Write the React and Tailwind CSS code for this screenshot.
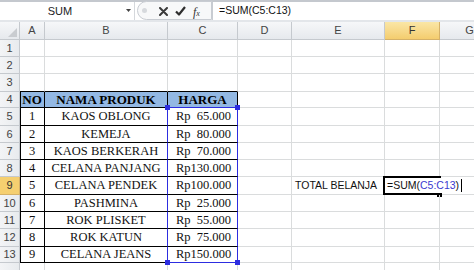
import React from 'react';

const items = [
  ['1', 'KAOS OBLONG', '65.000'],
  ['2', 'KEMEJA', '80.000'],
  ['3', 'KAOS BERKERAH', '70.000'],
  ['4', 'CELANA PANJANG', '130.000'],
  ['5', 'CELANA PENDEK', '100.000'],
  ['6', 'PASHMINA', '25.000'],
  ['7', 'ROK PLISKET', '55.000'],
  ['8', 'ROK KATUN', '75.000'],
  ['9', 'CELANA JEANS', '150.000'],
];

const colW = ['w-[20px]', 'w-[25px]', 'w-[123px]', 'w-[70px]', 'w-[54px]', 'w-[93px]', 'w-[55px]', 'w-[60px]'];
const rowH = ['h-[17px]', 'h-[17px]', 'h-[18px]', 'h-[16px]', 'h-[18px]', 'h-[17px]', 'h-[17px]', 'h-[17px]', 'h-[18px]', 'h-[17px]', 'h-[17px]', 'h-[18px]', 'h-[16px]', 'h-[20px]'];

const sans = { fontFamily: '"Liberation Sans", Arial, sans-serif' };
const serif = { fontFamily: '"Liberation Serif", "Times New Roman", serif' };

const grid = 'shrink-0 border-r border-b border-[#dadcdd]';

function Handle({ pos }) {
  return <span className={`absolute w-[5px] h-[5px] bg-[#2d2de0] ${pos}`} />;
}

function FormulaBar() {
  return (
    <div className="flex h-[22px] border-t-2 border-[#c4c8ce] bg-white border-b-2 border-b-[#e3e6ea]" style={sans}>
      <div className="w-[135px] shrink-0 flex items-center relative border-r border-[#d5d8dc]">
        <span className="w-[120px] text-center text-[11px] text-[#222]">SUM</span>
        <svg className="absolute left-[126px] top-[7px]" width="5" height="4" viewBox="0 0 5 4">
          <path d="M0 0h5L2.5 3z" fill="#444" />
        </svg>
      </div>
      <div className="w-[75px] shrink-0 flex items-center relative bg-[#f7f8f9] rounded-l-[10px] border border-[#c8ccd2] ml-[2px] -mt-[1px]">
        <span className="absolute left-[4px] top-[6px] w-[5px] h-[5px] rounded-full bg-[#d6d9dd]" />
        <svg className="absolute left-[21px] top-[5px]" width="9" height="9" viewBox="0 0 9 9">
          <path d="M1 1l7 7M8 1L1 8" stroke="#3a3a3a" strokeWidth="2" strokeLinecap="round" />
        </svg>
        <svg className="absolute left-[37px] top-[4px]" width="11" height="10" viewBox="0 0 11 10">
          <path d="M1 5.5L4 8.5L10 1" stroke="#2e2e2e" strokeWidth="2.2" fill="none" strokeLinejoin="round" />
        </svg>
        <span className="absolute left-[55px] top-[1px] text-[12px] italic text-[#333]" style={serif}>
          f<span className="text-[8px]">x</span>
        </span>
      </div>
      <div className="flex-1 flex items-center pl-[6px] border-l border-[#c8ccd2] text-[10.5px] text-[#111]">
        =SUM(C5:C13)
      </div>
    </div>
  );
}

function ColHeaders() {
  const letters = ['A', 'B', 'C', 'D', 'E', 'F', 'G'];
  return (
    <div className="flex h-[18px]" style={sans}>
      <div className={`${colW[0]} shrink-0 relative border-r border-b border-[#c5c9ce] bg-gradient-to-b from-[#f6f7f9] to-[#e6e9ed]`}>
        <svg className="absolute right-[2px] bottom-[2px]" width="9" height="9" viewBox="0 0 9 9">
          <path d="M9 0V9H0z" fill="#c9ccd0" />
        </svg>
      </div>
      {letters.map((l, i) => (
        <div
          key={l}
          className={`${colW[i + 1]} shrink-0 flex items-center justify-center text-[11px] border-r border-b ${
            l === 'F'
              ? 'bg-gradient-to-b from-[#fae6a6] to-[#f4cd6e] border-[#d5b168] text-[#333]'
              : 'bg-gradient-to-b from-[#f6f7f9] to-[#e6e9ed] border-[#c5c9ce] text-[#444]'
          }`}
        >
          {l}
        </div>
      ))}
    </div>
  );
}

function RowHead({ n }) {
  return (
    <div
      className={`${colW[0]} shrink-0 flex items-center justify-center text-[11px] border-r border-b ${
        n === 9
          ? 'bg-[#f5cf70] border-[#d5b168] text-[#333]'
          : 'bg-gradient-to-r from-[#f3f4f6] to-[#e8ebee] border-[#c5c9ce] text-[#444]'
      }`}
      style={sans}
    >
      {n < 14 ? n : null}
    </div>
  );
}

function Row({ n }) {
  const h = rowH[n - 1];
  const data = n >= 5 && n <= 13 ? items[n - 5] : null;

  let a = null, b = null, c = null;
  if (n === 4) {
    a = <div className={`${colW[1]} shrink-0 flex items-center justify-center border-r border-b border-black bg-[#93b8e3] shadow-[inset_1px_0_0_#000] text-[13px] font-bold`} style={serif}>NO</div>;
    b = <div className={`${colW[2]} shrink-0 flex items-center justify-center border-r border-b border-black bg-[#93b8e3] text-[13px] font-bold`} style={serif}>NAMA PRODUK</div>;
    c = (
      <div className={`${colW[3]} shrink-0 relative flex items-center justify-center border-r border-black border-b border-b-[#2d2de0] bg-[#93b8e3] text-[13px] font-bold`} style={serif}>
        HARGA
      </div>
    );
  } else if (data) {
    a = <div className={`${colW[1]} shrink-0 flex items-center justify-center border-r border-b border-black shadow-[inset_1px_0_0_#000] text-[12.5px] text-[#111]`} style={serif}>{data[0]}</div>;
    b = <div className={`${colW[2]} shrink-0 flex items-center justify-center border-r border-r-[#2d2de0] border-b border-b-black text-[12.5px] text-[#111]`} style={serif}>{data[1]}</div>;
    c = (
      <div
        className={`${colW[3]} shrink-0 relative flex items-center justify-between pl-[8px] pr-[6px] border-r border-r-[#2d2de0] border-b text-[12.5px] text-[#111] ${
          n === 13 ? 'border-b-[#2d2de0]' : 'border-b-black'
        }`}
        style={serif}
      >
        <span>Rp</span>
        <span>{data[2]}</span>
        {n === 5 && (
          <>
            <Handle pos="-left-[3px] -top-[3px]" />
            <Handle pos="-right-[3px] -top-[3px]" />
          </>
        )}
        {n === 13 && (
          <>
            <Handle pos="-left-[3px] -bottom-[3px]" />
            <Handle pos="-right-[3px] -bottom-[3px]" />
          </>
        )}
      </div>
    );
  } else {
    const bb = n === 3 ? 'border-b-black' : '';
    a = <div className={`${colW[1]} ${grid} ${bb}`} />;
    b = <div className={`${colW[2]} ${grid} ${bb}`} />;
    c = <div className={`${colW[3]} ${grid} ${bb}`} />;
  }

  return (
    <div className={`flex ${h}`}>
      <RowHead n={n} />
      {a}
      {b}
      {c}
      <div className={`${colW[4]} ${grid}`} />
      <div className={`${colW[5]} ${grid} flex items-center pl-[3px]`} style={sans}>
        {n === 9 && <span className="text-[10.5px] text-[#111] whitespace-nowrap">TOTAL BELANJA</span>}
      </div>
      <div className={`${colW[6]} ${grid} relative flex items-center`} style={sans}>
        {n === 9 && (
          <>
            <span className="absolute -left-[2px] -top-[1px] w-[58px] h-[19px] border-2 border-black" />
            <span className="absolute left-[52px] -bottom-[3px] w-[5px] h-[4px] bg-black" />
            <span className="relative z-10 ml-[2px] pr-[1px] bg-white text-[10.5px] text-[#111] whitespace-nowrap flex items-center">
              =SUM(<span className="text-[#3a3ad0]">C5:C13</span>)
              <span className="inline-block w-[1px] h-[13px] bg-black ml-[2px]" />
            </span>
          </>
        )}
      </div>
      <div className={`${colW[7]} ${grid}`} />
    </div>
  );
}

export default function App() {
  return (
    <div className="w-[474px] h-[270px] overflow-hidden bg-white">
      <FormulaBar />
      <ColHeaders />
      {Array.from({ length: 14 }, (_, i) => (
        <Row key={i} n={i + 1} />
      ))}
    </div>
  );
}
